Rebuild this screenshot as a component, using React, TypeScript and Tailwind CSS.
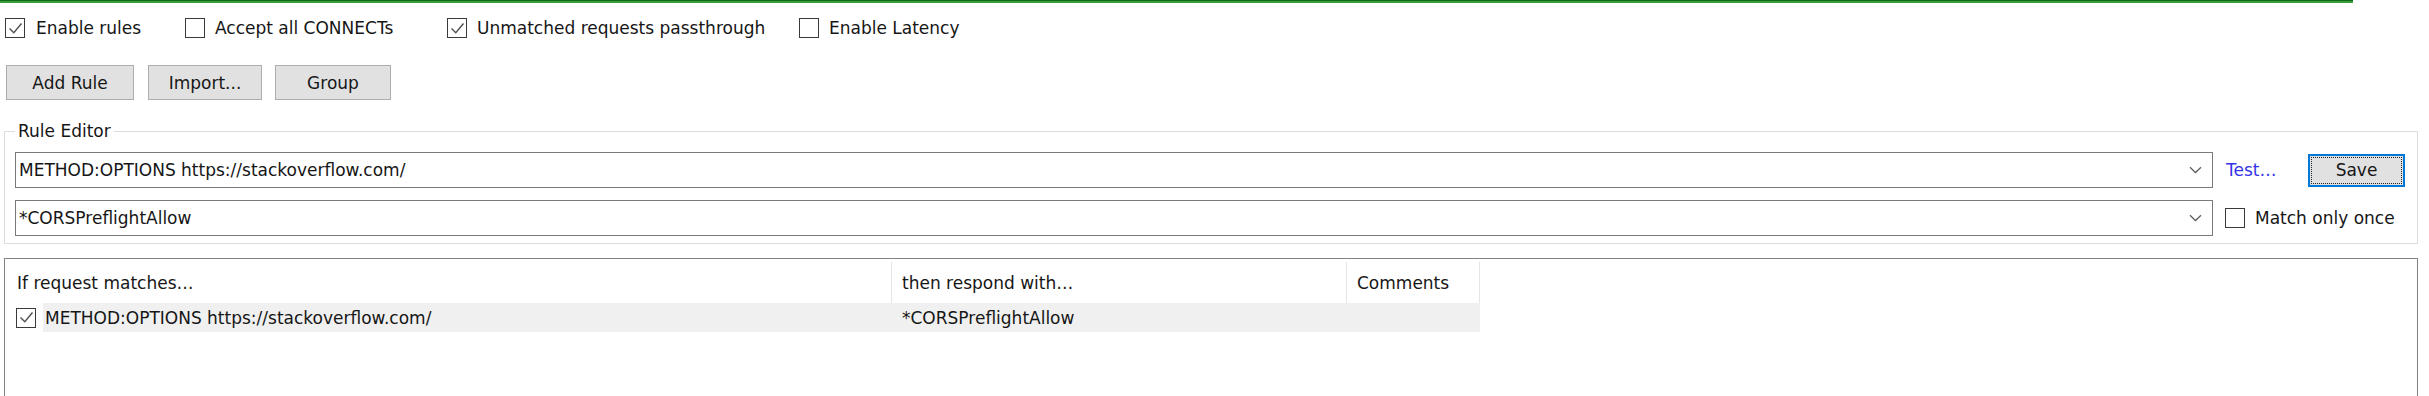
import React from "react";

function Check({ checked }: { checked?: boolean }) {
  return (
    <span className="flex h-[20px] w-[20px] shrink-0 items-center justify-center border-[1.5px] border-[#3a3a3a] bg-white">
      {checked && (
        <svg width="17" height="17" viewBox="0 0 17 17" fill="none">
          <path d="M2.5 8.5 L6.8 12.8 L14.5 3.5" stroke="#505050" strokeWidth="1.4" />
        </svg>
      )}
    </span>
  );
}

function Chevron() {
  return (
    <svg className="ml-auto mr-[10px] shrink-0" width="13" height="8" viewBox="0 0 13 8" fill="none">
      <path d="M1 1.2 L6.5 6.5 L12 1.2" stroke="#606060" strokeWidth="1.3" />
    </svg>
  );
}

export default function App() {
  return (
    <div className="relative h-[396px] w-[2429px] overflow-hidden bg-white text-[17px] leading-[20px] text-[#161616] font-['DejaVu_Sans','Noto_Sans',sans-serif]">
      {/* green progress line */}
      <div className="h-[3px] w-[2353px] border-t border-[#0f6a14] bg-[#3a9d40]" />

      {/* checkbox options */}
      <div className="mt-[15px] flex h-[20px] items-center pl-[5px]">
        <div className="flex w-[180px] items-center">
          <Check checked />
          <span className="ml-[11px]">Enable rules</span>
        </div>
        <div className="flex w-[262px] items-center">
          <Check />
          <span className="ml-[10px]">Accept all CONNECTs</span>
        </div>
        <div className="flex w-[352px] items-center">
          <Check checked />
          <span className="ml-[10px]">Unmatched requests passthrough</span>
        </div>
        <div className="flex items-center">
          <Check />
          <span className="ml-[10px]">Enable Latency</span>
        </div>
      </div>

      {/* buttons */}
      <div className="mt-[27px] flex h-[35px] items-stretch">
        <button className="ml-[6px] w-[128px] border border-[#adadad] bg-[#e1e1e1] text-[#161616]">Add Rule</button>
        <button className="ml-[14px] w-[114px] border border-[#adadad] bg-[#e1e1e1] text-[#161616]">Import...</button>
        <button className="ml-[13px] w-[116px] border border-[#adadad] bg-[#e1e1e1] text-[#161616]">Group</button>
      </div>

      {/* Rule Editor group */}
      <fieldset className="ml-[4px] mt-[21px] w-[2414px] border border-[#dcdcdc] pb-[7px] pl-[10px] pr-[12px] pt-[11px]">
        <legend className="px-[3px] leading-[20px]">Rule Editor</legend>
        <div className="flex h-[36px] items-center">
          <div className="flex h-[36px] flex-1 items-center border border-[#7a7a7a] bg-white pl-[3px]">
            <span>METHOD:OPTIONS https://stackoverflow.com/</span>
            <Chevron />
          </div>
          <div className="flex w-[192px] items-center">
            <span className="ml-[13px] text-[#3434e6]">Test…</span>
            <button className="ml-auto h-[33px] w-[97px] border-2 border-[#0078d7] bg-[#e1e1e1] p-[1px]">
              <span className="flex h-full w-full items-center justify-center border border-dotted border-[#222222]">Save</span>
            </button>
          </div>
        </div>
        <div className="mt-[12px] flex h-[36px] items-center">
          <div className="flex h-[36px] flex-1 items-center border border-[#7a7a7a] bg-white pl-[3px]">
            <span>*CORSPreflightAllow</span>
            <Chevron />
          </div>
          <div className="flex w-[192px] items-center">
            <span className="ml-[12px]">
              <Check />
            </span>
            <span className="ml-[10px]">Match only once</span>
          </div>
        </div>
      </fieldset>

      {/* rules list */}
      <div className="ml-[4px] mt-[14px] h-[220px] w-[2414px] border border-[#828282] bg-white">
        <div className="flex h-[44px] items-stretch pt-[3px]">
          <div className="flex w-[887px] items-center border-r border-[#e5e5e5] pl-[12px]">If request matches…</div>
          <div className="flex w-[455px] items-center border-r border-[#e5e5e5] pl-[10px]">then respond with…</div>
          <div className="flex w-[133px] items-center border-r border-[#e5e5e5] pl-[10px]">Comments</div>
        </div>
        <div className="flex h-[29px] items-center">
          <span className="ml-[11px]">
            <Check checked />
          </span>
          <div className="ml-[7px] flex h-full items-center bg-[#f0f0f0]">
            <div className="flex w-[849px] items-center pl-[2px]">METHOD:OPTIONS https://stackoverflow.com/</div>
            <div className="flex w-[455px] items-center pl-[10px]">*CORSPreflightAllow</div>
            <div className="w-[133px]" />
          </div>
        </div>
      </div>
    </div>
  );
}
